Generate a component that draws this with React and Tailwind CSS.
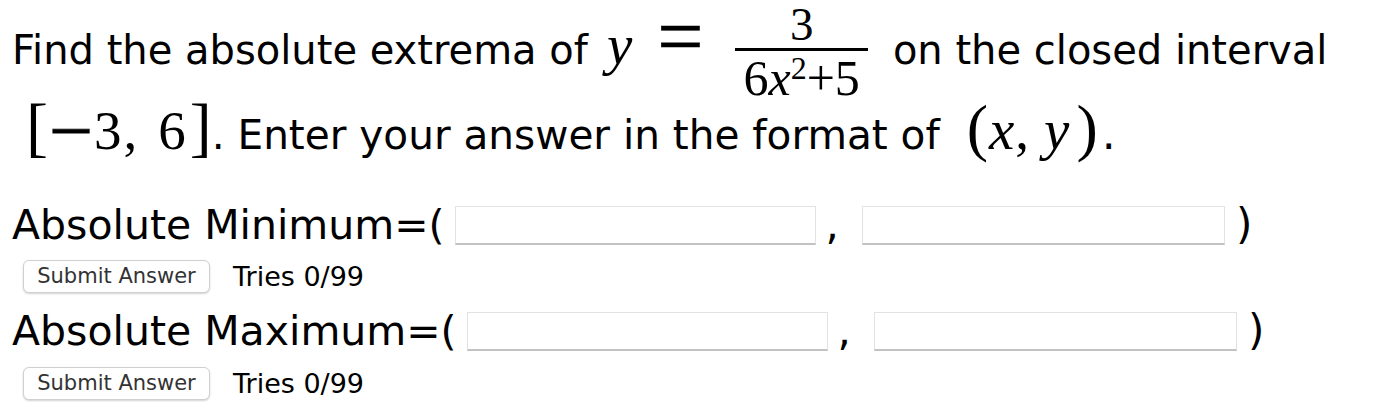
export default function App() {
  const serif = "font-['Liberation_Serif',serif]";
  return (
    <div className="w-[1400px] h-[412px] bg-white text-black font-['DejaVu_Sans',Verdana,sans-serif] overflow-hidden pl-[12px] whitespace-nowrap">
      {/* line 1 */}
      <div className="flex items-baseline h-[92px] pt-[7px]">
        <span className="text-[40px] leading-none">Find the absolute extrema of</span>
        <span className={`${serif} ml-[19px] italic text-[57px] leading-none`}>y</span>
        <span className={`${serif} ml-[25px] -mt-[17px] -mb-[17px] text-[82px] leading-[94px] [-webkit-text-stroke:0.6px_black]`}>=</span>
        <span className={`${serif} self-center mt-[4px] ml-[32px] inline-flex flex-col items-center`}>
          <span className="-mt-[4px] -mb-[3px] text-[47px] leading-[54px]">3</span>
          <span className="w-full h-[3px] bg-black"></span>
          <span className="mt-[2px] px-[8px] text-[50px] leading-none">
            6<i>x</i><sup className="text-[32px]">2</sup>+5
          </span>
        </span>
        <span className="ml-[25px] text-[40px] leading-none">on the closed interval</span>
      </div>

      {/* line 2 */}
      <div className="flex items-baseline h-[70px]">
        <span className={`${serif} ml-[14px] text-[66px] leading-none`}>[</span>
        <span className={`${serif} ml-[1px] text-[52px] leading-none`}>
          <span className="text-[78px] align-[-8px] [-webkit-text-stroke:0.8px_black]">−</span>
        </span>
        <span className={`${serif} ml-[1px] text-[55px] leading-none`}>3</span>
        <span className={`${serif} ml-[2px] text-[55px] leading-none`}>,</span>
        <span className={`${serif} ml-[21px] text-[55px] leading-none`}>6</span>
        <span className={`${serif} ml-[4px] text-[66px] leading-none`}>]</span>
        <span className="text-[40.6px] leading-none">. Enter your answer in the format of</span>
        <span className={`${serif} ml-[27px] text-[64px] leading-none`}>(</span>
        <span className={`${serif} ml-[1px] italic text-[57px] leading-none`}>x</span>
        <span className={`${serif} ml-[1px] text-[55px] leading-none`}>,</span>
        <span className={`${serif} ml-[15px] italic text-[57px] leading-none`}>y</span>
        <span className={`${serif} ml-[7px] text-[64px] leading-none`}>)</span>
        <span className="ml-[4px] text-[44px] leading-none">.</span>
      </div>

      <AnswerRow label="Absolute Minimum=(" top="mt-[42px]" />
      <SubmitRow top="mt-[14px]" />
      <AnswerRow label="Absolute Maximum=(" top="mt-[17px]" />
      <SubmitRow top="mt-[15px]" />
    </div>
  );
}

function AnswerRow({ label, top }) {
  return (
    <div className={`${top} flex items-center h-[42px]`}>
      <span className="text-[41px] leading-none">{label}</span>
      <input
        type="text"
        className="ml-[10px] w-[361px] h-[39px] bg-white border border-[#e2e2e2] border-b-2 border-b-[#c2c2c2] outline-none"
      />
      <span className="ml-[10px] text-[42px] leading-none">,</span>
      <input
        type="text"
        className="ml-[23px] w-[363px] h-[39px] bg-white border border-[#e2e2e2] border-b-2 border-b-[#c2c2c2] outline-none"
      />
      <span className="ml-[11px] text-[42px] leading-none">)</span>
    </div>
  );
}

function SubmitRow({ top }) {
  return (
    <div className={`${top} flex items-center h-[33px]`}>
      <button className="ml-[11px] w-[187px] h-[33px] rounded-[6px] border border-[#d0d0d0] bg-white shadow-[0_1px_2px_rgba(0,0,0,0.18)] text-[21px] leading-none text-[#333]">
        Submit Answer
      </button>
      <span className="ml-[23px] text-[27px] leading-none">Tries 0/99</span>
    </div>
  );
}
